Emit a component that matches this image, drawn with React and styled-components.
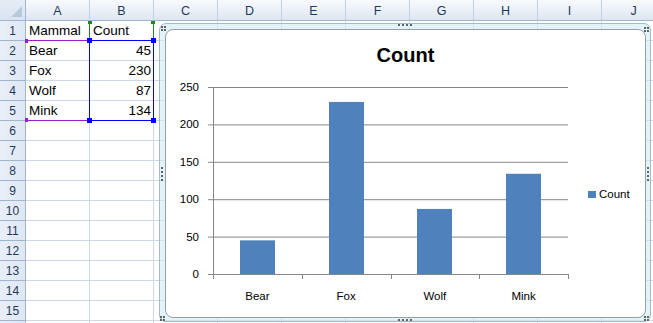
import React from "react";
import styled, { createGlobalStyle } from "styled-components";

const Global = createGlobalStyle`
  html, body { margin: 0; padding: 0; background: #fff; overflow: hidden; }
  body { font-family: "Liberation Sans", Arial, sans-serif; }
`;

const COLS = ["A", "B", "C", "D", "E", "F", "G", "H", "I", "J"];
const DATA = [
  ["Bear", 45],
  ["Fox", 230],
  ["Wolf", 87],
  ["Mink", 134],
];

const DOT = "#5e6468";
const solid = (c) => `linear-gradient(${c},${c})`;
const layer = (img, x, y, w, h) => `${img} ${x}px ${y}px / ${w}px ${h}px no-repeat`;
const corner = (x, y) =>
  [
    layer(solid(DOT), x, y, 2, 2),
    layer(solid(DOT), x + 3, y, 2, 2),
    layer(solid(DOT), x, y + 3, 2, 2),
    layer(solid(DOT), x + 3, y + 3, 2, 2),
  ].join(",");
const vRun = `repeating-linear-gradient(to bottom, ${DOT} 0 2px, transparent 2px 4px)`;
const hRun = `repeating-linear-gradient(to right, ${DOT} 0 2px, transparent 2px 4px)`;
const FRAME_HANDLES = [
  corner(1, 2),
  corner(484, 3),
  corner(0, 292),
  corner(484, 292),
  layer(vRun, 1, 143, 2, 14),
  layer(vRun, 487, 143, 2, 14),
  layer(hRun, 238, 0, 14, 2),
  layer(hRun, 238, 295, 14, 2),
].join(",");

const Page = styled.div`
  position: relative;
  width: 653px;
  height: 323px;
  overflow: hidden;
`;

const Sheet = styled.div`
  display: grid;
  grid-template-columns: 26px repeat(10, 64px);
  grid-template-rows: 21px repeat(16, 20px);
  width: max-content;
`;

const Corner = styled.div`
  box-sizing: border-box;
  background: linear-gradient(#e6edf7, #d9e3f1);
  border-right: 1px solid #9eb6ce;
  border-bottom: 1px solid #9eb6ce;
  display: flex;
  align-items: flex-end;
  justify-content: flex-end;
  padding: 0 3px 3px 0;
`;

const ColHead = styled.div`
  box-sizing: border-box;
  background: linear-gradient(#f8fafd 0%, #eaeff7 55%, #dfe6f1 100%);
  border-right: 1px solid #c3d1e2;
  border-bottom: 1px solid #9eb6ce;
  color: #1f3a5c;
  font-size: 12.5px;
  display: flex;
  align-items: center;
  justify-content: center;
  padding-top: 1px;
`;

const RowHead = styled.div`
  box-sizing: border-box;
  background: linear-gradient(90deg, #e9eff8, #dfe7f3);
  border-right: 1px solid #9eb6ce;
  border-bottom: 1px solid #9eb6ce;
  color: #1f3a5c;
  font-size: 12px;
  display: flex;
  align-items: center;
  justify-content: center;
  padding-top: 1px;
`;

const Cell = styled.div`
  box-sizing: border-box;
  border-right: 1px solid #d0d7e5;
  border-bottom: 1px solid #d0d7e5;
  font-size: 13.5px;
  color: #000;
  display: flex;
  align-items: flex-end;
  justify-content: ${(p) => (p.$num ? "flex-end" : "flex-start")};
  padding: 0 2px 2px 3px;
  white-space: nowrap;
`;

/* selection outlines drawn over the cells, with their corner handles as background layers */
const SelBox = styled.div`
  position: absolute;
  box-sizing: border-box;
  left: ${(p) => p.$x}px;
  top: ${(p) => p.$y}px;
  width: ${(p) => p.$w}px;
  height: ${(p) => p.$h}px;
  border: 1px solid ${(p) => p.$c};
  ${(p) => (p.$noLeft ? "border-left: none;" : "")}
  ${(p) => (p.$sides ? "border-top: none; border-bottom: none;" : "")}
  &::after {
    content: "";
    position: absolute;
    left: ${(p) => p.$hx}px;
    right: ${(p) => p.$hx}px;
    top: ${(p) => p.$hy}px;
    bottom: ${(p) => p.$hy}px;
    background: ${(p) => p.$handles};
  }
`;

const Frame = styled.div`
  position: absolute;
  left: 159px;
  top: 23px;
  width: 492px;
  height: 299px;
  box-sizing: border-box;
  padding: 5px 4px 3px 5px;
  border: 1px solid #a9b9c0;
  border-radius: 7px;
  background: rgba(205, 236, 245, 0.6);
  &::before {
    content: "";
    position: absolute;
    inset: 0;
    z-index: 1;
    background: ${FRAME_HANDLES};
  }
`;

const Card = styled.div`
  box-sizing: border-box;
  height: 100%;
  background: #fff;
  border: 1px solid #9d9d9d;
  border-radius: 8px;
  display: flex;
  flex-direction: column;
`;

const Title = styled.div`
  padding: 13px 0 1px;
  line-height: 24px;
  font-size: 20px;
  font-weight: bold;
  text-align: center;
  color: #000;
`;

const Body = styled.div`
  display: flex;
  align-items: flex-start;
`;

const Legend = styled.div`
  margin: 119px 0 0 13px;
  display: flex;
  align-items: center;
  gap: 3px;
  font-size: 11.5px;
  line-height: 14px;
  color: #000;
`;

const Swatch = styled.span`
  width: 8px;
  height: 7px;
  background: #4f81bd;
`;

const four = (c, w, h) =>
  [
    layer(solid(c), 0, 0, w, h),
    `${solid(c)} right 0 top 0 / ${w}px ${h}px no-repeat`,
    `${solid(c)} left 0 bottom 0 / ${w}px ${h}px no-repeat`,
    `${solid(c)} right 0 bottom 0 / ${w}px ${h}px no-repeat`,
  ].join(",");
const topPair = (c, w, h) =>
  [layer(solid(c), 0, 0, w, h), `${solid(c)} right 0 top 0 / ${w}px ${h}px no-repeat`].join(",");
const leftPair = (c, w, h) =>
  [layer(solid(c), 0, 0, w, h), `${solid(c)} left 0 bottom 0 / ${w}px ${h}px no-repeat`].join(",");

function Chart() {
  const axisX = 47;
  const right = 402;
  const top = 19;
  const bottom = 206;
  const step = (bottom - top) / 5;
  const catW = (right - axisX) / 4;
  const barW = 35;
  const ticks = [0, 50, 100, 150, 200, 250];
  const font = "Liberation Sans, Arial, sans-serif";
  return (
    <svg width="409" height="242" style={{ display: "block" }}>
      {ticks.map((t, i) => {
        const y = bottom - i * step;
        return (
          <g key={t}>
            <line x1={axisX - 5} x2={right} y1={y + 0.5} y2={y + 0.5} stroke="#878787" strokeWidth="1" />
            <text x={33} y={y + 4} textAnchor="end" fontSize="11.5" fontFamily={font} fill="#000">
              {t}
            </text>
          </g>
        );
      })}
      <line x1={axisX + 0.5} x2={axisX + 0.5} y1={top} y2={bottom + 5} stroke="#878787" />
      {[1, 2, 3, 4].map((i) => (
        <line
          key={i}
          x1={Math.round(axisX + i * catW) + 0.5}
          x2={Math.round(axisX + i * catW) + 0.5}
          y1={bottom}
          y2={bottom + 5}
          stroke="#878787"
        />
      ))}
      {DATA.map(([name, v], i) => {
        const h = (v / 250) * (bottom - top);
        const x = axisX + i * catW + (catW - barW) / 2;
        return (
          <g key={name}>
            <rect x={Math.round(x)} y={bottom - h} width={barW} height={h} fill="#4f81bd" />
            <text
              x={axisX + (i + 0.5) * catW}
              y={232}
              textAnchor="middle"
              fontSize="11.5"
              fontFamily={font}
              fill="#000"
            >
              {name}
            </text>
          </g>
        );
      })}
    </svg>
  );
}

export default function App() {
  const rows = Array.from({ length: 16 }, (_, i) => i + 1);
  const cellText = (r, c) => {
    if (r === 1 && c === 0) return ["Mammal", false];
    if (r === 1 && c === 1) return ["Count", false];
    if (r >= 2 && r <= 5) {
      const d = DATA[r - 2];
      if (c === 0) return [d[0], false];
      if (c === 1) return [String(d[1]), true];
    }
    return ["", false];
  };
  return (
    <Page>
      <Global />
      <Sheet>
        <Corner>
          <svg width="11" height="11" viewBox="0 0 11 11">
            <polygon points="11,0 11,11 0,11" fill="#b9c9dc" />
          </svg>
        </Corner>
        {COLS.map((c) => (
          <ColHead key={c}>{c}</ColHead>
        ))}
        {rows.map((r) => (
          <React.Fragment key={r}>
            <RowHead>{r < 16 ? r : ""}</RowHead>
            {COLS.map((c, ci) => {
              const [t, num] = cellText(r, ci);
              return (
                <Cell key={c} $num={num}>
                  {t}
                </Cell>
              );
            })}
          </React.Fragment>
        ))}
      </Sheet>

      <SelBox
        $x={26}
        $y={40}
        $w={64}
        $h={81}
        $c="#9a1fc9"
        $noLeft
        $hx={-1}
        $hy={-2}
        $handles={leftPair("#9a1fc9", 3, 4)}
      />
      <SelBox
        $x={89}
        $y={21}
        $w={65}
        $h={20}
        $c="#1a8a1a"
        $sides
        $hx={-2}
        $hy={0}
        $handles={topPair("#1a8a1a", 4, 3)}
      />
      <SelBox
        $x={89}
        $y={40}
        $w={65}
        $h={81}
        $c="#0000ff"
        $hx={-3}
        $hy={-3}
        $handles={four("#0000ff", 5, 5)}
      />

      <Frame>
        <Card>
          <Title>Count</Title>
          <Body>
            <Chart />
            <Legend>
              <Swatch />
              Count
            </Legend>
          </Body>
        </Card>
      </Frame>
    </Page>
  );
}
